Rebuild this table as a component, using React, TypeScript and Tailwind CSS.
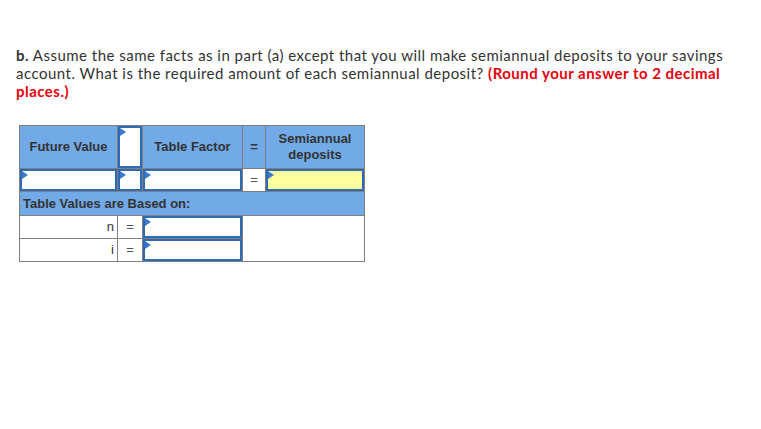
import React from "react";

const Tri = () => (
  <svg className="absolute left-0 top-0" width="6" height="8" viewBox="0 0 6 8">
    <polygon points="0,0 6,4 0,8" fill="#3a78c9" />
  </svg>
);

const Input = ({ yellow = false, tri = true }: { yellow?: boolean; tri?: boolean }) => (
  <div className={`relative h-full w-full border-2 border-[#2f6bb5] ${yellow ? "bg-[#ffff9e]" : "bg-white"}`}>
    {tri && <Tri />}
  </div>
);

export default function App() {
  const cell = "border-r border-b border-[#7f7f7f]";
  const head = `${cell} bg-[#72a9e7] flex items-center justify-center text-center font-bold text-[13px] leading-[16px] text-[#333]`;
  return (
    <div className="w-[761px] h-[429px] bg-white" style={{ fontFamily: "'Liberation Sans', Arial, sans-serif" }}>
      <div className="pl-[16px] pt-[46px] pr-[20px] text-[15px] leading-[18px] tracking-[0.48px] text-[#333]" style={{ fontFamily: "Lato, 'Open Sans', sans-serif" }}>
        <span className="font-bold">b.</span> Assume the same facts as in part (a) except that you will make semiannual deposits to your savings account. What is the required amount of each semiannual deposit?{" "}
        <span className="font-bold text-[#e8000b]">(Round your answer to 2 decimal places.)</span>
      </div>
      <div className="ml-[19px] mt-[25px] w-[346px] border-l border-t border-[#7f7f7f] grid grid-cols-[98px_25px_100px_23px_99px] grid-rows-[43px_23px_24px_23px_23px]">
        <div className={head}>Future Value</div>
        <div className={`${cell} bg-white`}><Input /></div>
        <div className={head}>Table Factor</div>
        <div className={head}>=</div>
        <div className={head}>Semiannual<br />deposits</div>

        <div className={`${cell} bg-white`}><Input /></div>
        <div className={`${cell} bg-white`}><Input /></div>
        <div className={`${cell} bg-white`}><Input /></div>
        <div className={`${cell} bg-white flex items-center justify-center text-[13px] text-[#555]`}>=</div>
        <div className={`${cell} bg-white`}><Input yellow /></div>

        <div className={`${cell} col-span-5 bg-[#72a9e7] flex items-center pl-[3px] font-bold text-[13px] text-[#333]`}>Table Values are Based on:</div>

        <div className={`${cell} bg-white flex items-center justify-end pr-[3px] text-[13px] text-[#333]`}>n</div>
        <div className={`${cell} bg-white flex items-center justify-center text-[13px] text-[#555]`}>=</div>
        <div className={`${cell} bg-white`}><Input /></div>
        <div className={`${cell} bg-white col-span-2 row-span-2`}></div>

        <div className={`${cell} bg-white flex items-center justify-end pr-[3px] text-[13px] text-[#333]`}>i</div>
        <div className={`${cell} bg-white flex items-center justify-center text-[13px] text-[#555]`}>=</div>
        <div className={`${cell} bg-white`}><Input /></div>
      </div>
    </div>
  );
}
